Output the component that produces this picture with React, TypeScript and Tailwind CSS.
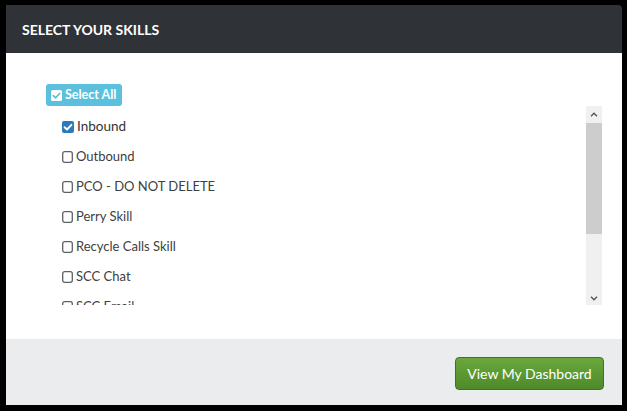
import { useState } from "react";

const skills = [
  "Inbound",
  "Outbound",
  "PCO - DO NOT DELETE",
  "Perry Skill",
  "Recycle Calls Skill",
  "SCC Chat",
  "SCC Email",
];

function CheckedBox({ fill = "#2b7bba", mark = "#ffffff", size = 12 }) {
  return (
    <svg width={size} height={size} viewBox="0 0 12 12" className="shrink-0">
      <rect x="0" y="0" width="12" height="12" rx="2" fill={fill} />
      <path
        d="M2.6 6.2 L5 8.5 L9.4 3.8"
        fill="none"
        stroke={mark}
        strokeWidth="1.9"
        strokeLinecap="round"
        strokeLinejoin="round"
      />
    </svg>
  );
}

function EmptyBox() {
  return (
    <svg width="11" height="12" viewBox="0 0 11 12" className="shrink-0 mr-[1px]">
      <rect x="0.7" y="0.7" width="9.6" height="10.6" rx="2" fill="none" stroke="#5c6166" strokeWidth="1.3" />
    </svg>
  );
}

export default function App() {
  const [checked, setChecked] = useState<string[]>(["Inbound"]);

  const toggle = (s: string) =>
    setChecked((c) => (c.includes(s) ? c.filter((x) => x !== s) : [...c, s]));

  return (
    <div
      className="w-[627px] h-[411px] bg-black pl-[6px] pt-[5px] pr-[5px] pb-[6px]"
      style={{ fontFamily: "Lato, 'Open Sans', sans-serif" }}
    >
      <div className="flex flex-col h-full rounded-tr-[4px] overflow-hidden">
        {/* Header */}
        <div className="h-[48px] shrink-0 bg-[#2f3337] flex items-center px-[16px]">
          <h2 className="text-white text-[14px] font-bold uppercase">Select your skills</h2>
        </div>

        {/* Body */}
        <div className="flex-1 bg-white pl-[40px] pr-[20px] pt-[31px]">
          <button className="flex items-center gap-[3px] h-[22px] pl-[5px] pr-[6px] rounded-[3px] bg-[#5bc0de] text-white text-[12.5px] font-bold">
            <CheckedBox fill="#ffffff" mark="#5bc0de" size={11} />
            Select All
          </button>

          <div className="flex h-[199px]">
            <div className="flex-1 overflow-hidden pl-[16px] pt-[5px]">
              {skills.map((s) => (
                <label
                  key={s}
                  className="flex items-center gap-[2px] h-[30px] pt-[1px] text-[13px] text-[#404040] cursor-pointer"
                  onClick={() => toggle(s)}
                >
                  {checked.includes(s) ? <CheckedBox /> : <EmptyBox />}
                  <span className={checked.includes(s) ? "text-[#333] text-[13.5px] ml-[1px]" : ""}>{s}</span>
                </label>
              ))}
            </div>

            {/* Scrollbar */}
            <div className="w-[16px] shrink-0 bg-[#f0f0f0] flex flex-col">
              <div className="h-[17px] flex items-center justify-center">
                <svg width="8" height="5" viewBox="0 0 8 5">
                  <path d="M1 4.2 L4 1.2 L7 4.2" fill="none" stroke="#555" strokeWidth="1.4" />
                </svg>
              </div>
              <div className="h-[111px] bg-[#cdcdcd]" />
              <div className="flex-1" />
              <div className="h-[14px] flex items-center justify-center">
                <svg width="8" height="5" viewBox="0 0 8 5">
                  <path d="M1 0.8 L4 3.8 L7 0.8" fill="none" stroke="#555" strokeWidth="1.4" />
                </svg>
              </div>
            </div>
          </div>
        </div>

        {/* Footer */}
        <div className="h-[66px] shrink-0 bg-[#ebecee] flex justify-end pt-[18px] pr-[18px]">
          <button className="h-[33px] w-[149px] rounded-[4px] border border-[#3f7024] bg-gradient-to-b from-[#6aa83c] to-[#4e8a2a] text-white text-[14px]">
            View My Dashboard
          </button>
        </div>
      </div>
    </div>
  );
}
